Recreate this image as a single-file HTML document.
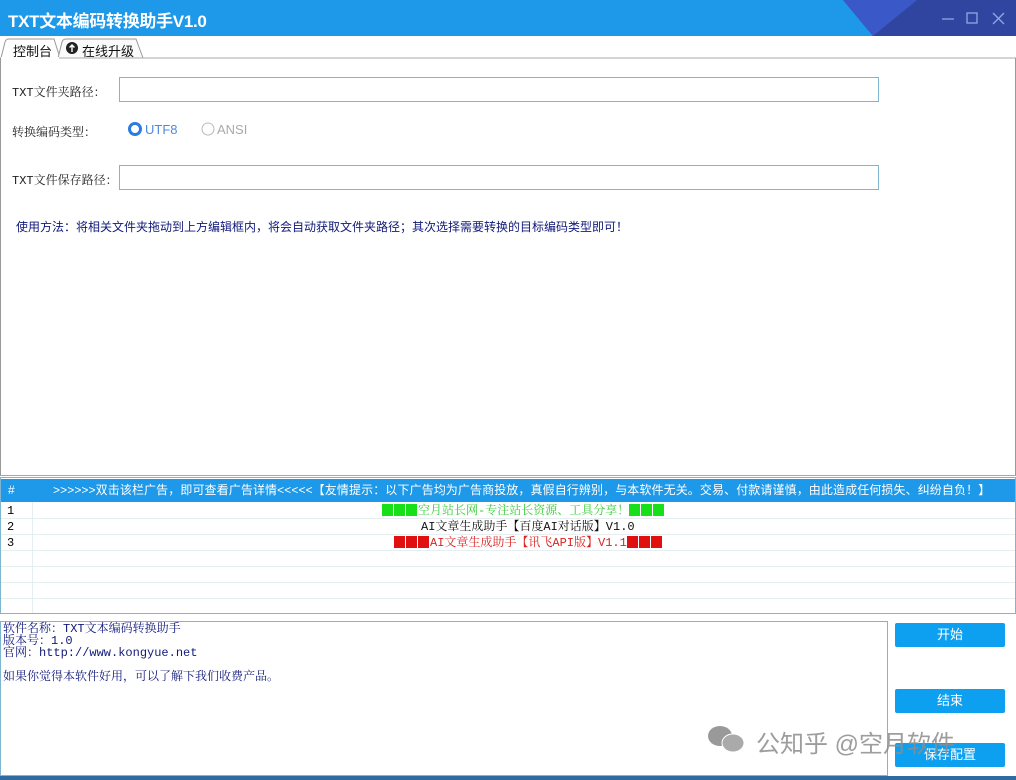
<!DOCTYPE html>
<html><head><meta charset="utf-8"><style>
*{margin:0;padding:0;box-sizing:border-box}
body{width:1016px;height:780px;overflow:hidden;background:#fff;position:relative;font-family:"Liberation Sans","Microsoft YaHei","Noto Sans CJK SC",sans-serif;}
.abs{position:absolute}
.lbl{font-family:"Liberation Mono","SimSun","Noto Serif CJK SC",monospace;font-size:12px;color:#222}
.inp{border:1px solid #7fb6cf;background:#fff;height:25px}
.btn{background:#0ea0f0;color:#fff;font-size:13px;text-align:center;border-radius:2px;width:110px;height:24px;line-height:24px;left:895px}
.row{left:1px;width:1014px;height:16px;border-bottom:1px solid #e6eef2;font-family:"Liberation Mono","SimSun","Noto Serif CJK SC",monospace;font-size:12px;line-height:16px}
.mono{font-family:"Liberation Mono","SimSun","Noto Serif CJK SC",monospace;font-size:12px;color:#111a7a;line-height:12px}
.sq{display:inline-block;width:11px;height:12px;margin-right:1px;vertical-align:-2px}
.g .sq{background:#18e018}.r .sq{background:#e01010}
</style></head><body>
<svg class="abs" style="left:0;top:0;z-index:1" width="1016" height="36" viewBox="0 0 1016 36">
<rect x="0" y="0" width="1016" height="36" fill="#2f45a0"/>
<polygon points="0,0 843,0 873,36 0,36" fill="#1e98e8"/>
<polygon points="843,0 917,0 873,36" fill="#3a58c8"/>
<line x1="942" y1="19" x2="954" y2="19" stroke="#8fa8e8" stroke-width="1.3"/>
<rect x="967" y="13" width="10" height="10" fill="none" stroke="#8fa8e8" stroke-width="1.3"/>
<path d="M993 13L1004 24M1004 13L993 24" stroke="#8fa8e8" stroke-width="1.3"/>
</svg>
<div class="abs" style="left:8px;top:7px;color:#fff;font-weight:bold;font-size:17px;letter-spacing:-0.3px;z-index:2">TXT文本编码转换助手V1.0</div>
<svg class="abs" style="left:0;top:36px" width="1016" height="24">
<path d="M1 22 L5 6 Q6 3 9 3 L54 3 L60 22" fill="#fff" stroke="#999"/>
<path d="M58 22 L62 6 Q63 3 66 3 L136 3 L143 22" fill="#fafafa" stroke="#999"/>
<line x1="0" y1="22" x2="1016" y2="22" stroke="#aaa"/>
<line x1="1" y1="22" x2="59" y2="22" stroke="#fff" stroke-width="2"/>
<circle cx="72" cy="12" r="6" fill="#222"/><path d="M72 16V9M69.5 11.5L72 9L74.5 11.5" stroke="#fff" stroke-width="1.4" fill="none"/>
</svg>
<div class="abs" style="left:13px;top:41px;font-size:13px;color:#111">控制台</div>
<div class="abs" style="left:82px;top:41px;font-size:13px;color:#111">在线升级</div>
<div class="abs" style="left:0;top:58px;width:1016px;height:418px;border-left:1px solid #999;border-right:1px solid #999;border-bottom:1px solid #7fb6cf"></div>
<div class="abs lbl" style="left:12px;top:83px">TXT文件夹路径：</div>
<div class="abs inp" style="left:119px;top:77px;width:760px"></div>
<div class="abs lbl" style="left:12px;top:123px">转换编码类型：</div>
<svg class="abs" style="left:127px;top:121px" width="16" height="16"><circle cx="8" cy="8" r="5.5" fill="#fff" stroke="#2a7de0" stroke-width="3"/></svg>
<div class="abs" style="left:145px;top:122px;font-size:13px;color:#4a8be0">UTF8</div>
<svg class="abs" style="left:200px;top:121px" width="16" height="16"><circle cx="8" cy="8" r="6" fill="#fff" stroke="#bbb" stroke-width="1"/></svg>
<div class="abs" style="left:217px;top:122px;font-size:13px;color:#aaa">ANSI</div>
<div class="abs lbl" style="left:12px;top:171px">TXT文件保存路径：</div>
<div class="abs inp" style="left:119px;top:165px;width:760px"></div>
<div class="abs" style="left:16px;top:218px;font-size:12px;color:#111a7a">使用方法：将相关文件夹拖动到上方编辑框内，将会自动获取文件夹路径；其次选择需要转换的目标编码类型即可！</div>
<div class="abs" style="left:0;top:477px;width:1016px;height:137px;border:1px solid #7fb6cf"></div>
<div class="abs" style="left:1px;top:479px;width:1014px;height:23px;background:#1e98e8;color:#fff;font-size:12px;line-height:23px">
<span class="abs" style="left:7px">#</span><span class="abs" style="left:52px;white-space:nowrap;letter-spacing:0.1px">&gt;&gt;&gt;&gt;&gt;&gt;双击该栏广告，即可查看广告详情&lt;&lt;&lt;&lt;&lt;【友情提示：以下广告均为广告商投放，真假自行辨别，与本软件无关。交易、付款请谨慎，由此造成任何损失、纠纷自负！】</span></div>
<div class="abs" style="left:32px;top:502px;width:1px;height:111px;background:#e6eef2"></div>
<div class="abs row" style="top:503px"><span class="abs" style="left:6px">1</span><span class="abs g" style="left:381px;color:#3c3;white-space:nowrap"><span class="sq"></span><span class="sq"></span><span class="sq"></span>空月站长网-专注站长资源、工具分享！<span class="sq"></span><span class="sq"></span><span class="sq"></span></span></div>
<div class="abs row" style="top:519px"><span class="abs" style="left:420px;color:#111;white-space:nowrap">AI文章生成助手【百度AI对话版】V1.0</span><span class="abs" style="left:6px">2</span></div>
<div class="abs row" style="top:535px"><span class="abs" style="left:6px">3</span><span class="abs r" style="left:393px;color:#d22;white-space:nowrap"><span class="sq"></span><span class="sq"></span><span class="sq"></span>AI文章生成助手【讯飞API版】V1.1<span class="sq"></span><span class="sq"></span><span class="sq"></span></span></div>
<div class="abs row" style="top:551px"></div><div class="abs row" style="top:567px"></div><div class="abs row" style="top:583px"></div>
<div class="abs" style="left:0;top:621px;width:888px;height:155px;border:1px solid #7fb6cf"></div>
<div class="abs mono" style="left:3px;top:623px">软件名称：TXT文本编码转换助手<br>版本号：1.0<br>官网：http://www.kongyue.net<br><br>如果你觉得本软件好用，可以了解下我们收费产品。</div>
<div class="abs btn" style="top:623px">开始</div>
<div class="abs btn" style="top:689px">结束</div>
<div class="abs btn" style="top:743px">保存配置</div>
<div class="abs" style="left:756px;top:724px;font-size:24px;color:rgba(140,140,140,0.85);white-space:nowrap">公知乎 @空月软件</div>
<svg class="abs" style="left:704px;top:724px" width="44" height="30"><ellipse cx="16" cy="12" rx="12" ry="10" fill="#999"/><ellipse cx="29" cy="19" rx="11" ry="9" fill="#aaa" stroke="#fff"/></svg>
<div class="abs" style="left:0;top:776px;width:1016px;height:4px;background:#2f6aa0"></div>
</body></html>
